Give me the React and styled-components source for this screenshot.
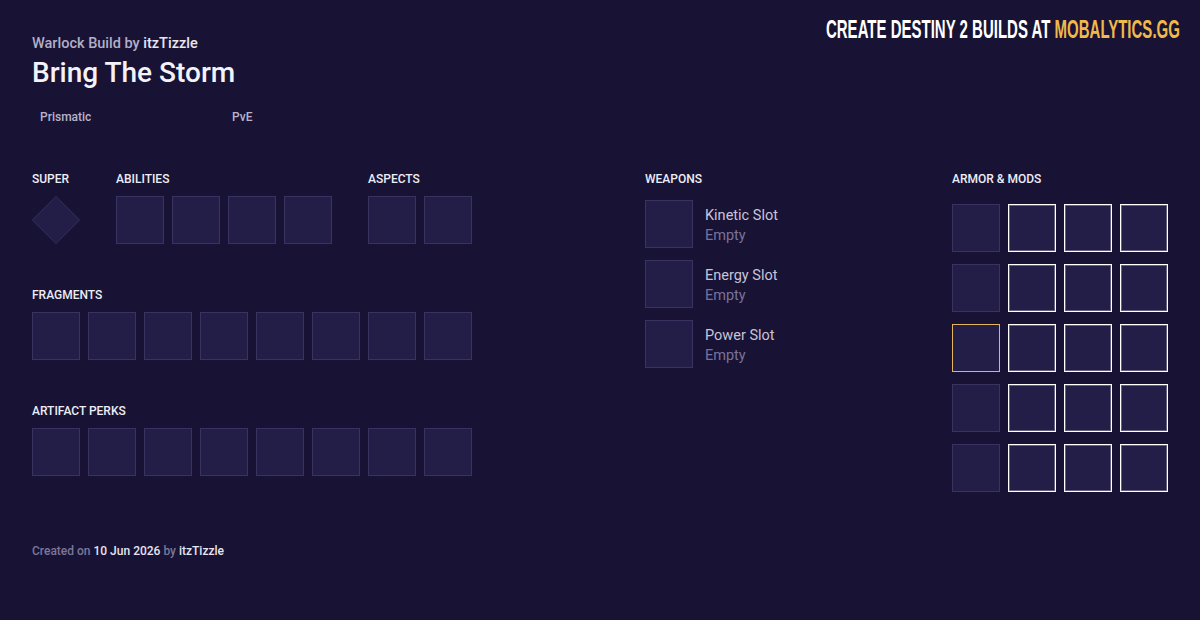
import React from 'react';
import styled, { createGlobalStyle } from 'styled-components';

const GlobalStyle = createGlobalStyle`
  html, body {
    margin: 0;
    padding: 0;
    background: #181334;
  }
  body {
    font-family: Roboto, "Noto Sans", sans-serif;
  }
`;

export const Page = styled.div`
  width: 1200px;
  height: 620px;
  box-sizing: border-box;
  padding: 17px 20px 0 32px;
  background: #181334;
  color: #eceaf4;
  display: flex;
  flex-direction: column;
`;

export const Header = styled.div`
  display: flex;
  justify-content: space-between;
  align-items: flex-start;
`;

export const TitleBlock = styled.div`
  display: flex;
  flex-direction: column;
  padding-top: 17px;
`;

export const Subtitle = styled.div`
  font-size: 14.5px;
  line-height: 20px;
  font-weight: 500;
  color: #b3aec8;
  b {
    color: #e8e6f1;
    font-weight: 500;
  }
`;

export const Title = styled.h1`
  margin: 2px 0 0;
  font-size: 28px;
  line-height: 34px;
  font-weight: 500;
  color: #f4f2f9;
`;

export const Tags = styled.div`
  display: grid;
  grid-template-columns: 192px 192px;
  margin-top: 15px;
`;

export const Tag = styled.div`
  padding: 4px 8px;
  font-size: 12px;
  line-height: 16px;
  font-weight: 500;
  color: #b8b3cb;
`;

export const Promo = styled.div`
  font-family: "Liberation Sans", Arial, sans-serif;
  font-weight: 700;
  font-size: 25px;
  line-height: 28px;
  color: #ffffff;
  white-space: nowrap;
  transform: scaleX(0.6);
  transform-origin: right top;
  margin-top: -2px;
  span {
    color: #f0b94a;
  }
`;

export const Body = styled.div`
  display: grid;
  grid-template-columns: 613px 307px 1fr;
  margin-top: 42px;
`;

export const Column = styled.div`
  display: flex;
  flex-direction: column;
  gap: 43px;
`;

export const Row = styled.div`
  display: flex;
  gap: 36px;
`;

export const Section = styled.div`
  display: flex;
  flex-direction: column;
`;

export const Label = styled.div`
  font-size: 12px;
  line-height: 16px;
  font-weight: 500;
  color: #eeedf5;
  margin-bottom: 9px;
`;

export const Boxes = styled.div`
  display: flex;
  gap: 8px;
`;

export const Box = styled.div`
  width: 48px;
  height: 48px;
  box-sizing: border-box;
  background: #231e47;
  border: 1px solid
    ${(p) => (p.$tone === 'white' ? '#ffffff' : p.$tone === 'gold' ? '#e7b559' : '#3a3361')};
  box-shadow: ${(p) => (p.$tone === 'white' ? 'inset 0 0 0 1px rgba(255, 255, 255, 0.3)' : 'none')};
`;

export const DiamondCell = styled.div`
  width: 48px;
  height: 48px;
  display: flex;
  align-items: center;
  justify-content: center;
`;

export const Diamond = styled.div`
  width: 34px;
  height: 34px;
  box-sizing: border-box;
  background: #231e47;
  border: 1px solid #2f2954;
  transform: rotate(45deg);
`;

export const WeaponList = styled.div`
  display: flex;
  flex-direction: column;
  gap: 12px;
  margin-top: 4px;
`;

export const Weapon = styled.div`
  display: flex;
  align-items: center;
  gap: 12px;
`;

export const WeaponText = styled.div`
  display: flex;
  flex-direction: column;
  margin-top: 3px;
`;

export const SlotName = styled.div`
  font-size: 14.5px;
  line-height: 20px;
  color: #c8c4d9;
`;

export const SlotValue = styled.div`
  font-size: 14.5px;
  line-height: 20px;
  color: #78729a;
`;

export const ArmorGrid = styled.div`
  display: grid;
  grid-template-columns: repeat(4, 48px);
  gap: 12px 8px;
  margin-top: 8px;
`;

export const Footer = styled.div`
  margin-top: 51px;
  font-size: 12px;
  line-height: 16px;
  font-weight: 500;
  color: #7c7699;
  b {
    color: #e6e4ef;
    font-weight: 500;
  }
`;

const range = (n) => Array.from({ length: n }, (_, i) => i);

const weapons = ['Kinetic Slot', 'Energy Slot', 'Power Slot'];

const App = () => {
  return (
    <>
      <GlobalStyle />
      <Page>
        <Header>
          <TitleBlock>
            <Subtitle>
              Warlock Build by <b>itzTizzle</b>
            </Subtitle>
            <Title>Bring The Storm</Title>
            <Tags>
              <Tag>Prismatic</Tag>
              <Tag>PvE</Tag>
            </Tags>
          </TitleBlock>
          <Promo>
            CREATE DESTINY 2 BUILDS AT <span>MOBALYTICS.GG</span>
          </Promo>
        </Header>

        <Body>
          <Column>
            <Row>
              <Section>
                <Label>SUPER</Label>
                <DiamondCell>
                  <Diamond />
                </DiamondCell>
              </Section>
              <Section>
                <Label>ABILITIES</Label>
                <Boxes>
                  {range(4).map((i) => (
                    <Box key={i} />
                  ))}
                </Boxes>
              </Section>
              <Section>
                <Label>ASPECTS</Label>
                <Boxes>
                  {range(2).map((i) => (
                    <Box key={i} />
                  ))}
                </Boxes>
              </Section>
            </Row>
            <Section>
              <Label>FRAGMENTS</Label>
              <Boxes>
                {range(8).map((i) => (
                  <Box key={i} />
                ))}
              </Boxes>
            </Section>
            <Section>
              <Label>ARTIFACT PERKS</Label>
              <Boxes>
                {range(8).map((i) => (
                  <Box key={i} />
                ))}
              </Boxes>
            </Section>
          </Column>

          <Section>
            <Label>WEAPONS</Label>
            <WeaponList>
              {weapons.map((w) => (
                <Weapon key={w}>
                  <Box />
                  <WeaponText>
                    <SlotName>{w}</SlotName>
                    <SlotValue>Empty</SlotValue>
                  </WeaponText>
                </Weapon>
              ))}
            </WeaponList>
          </Section>

          <Section>
            <Label>ARMOR &amp; MODS</Label>
            <ArmorGrid>
              {range(5).map((r) =>
                range(4).map((c) => (
                  <Box
                    key={`${r}-${c}`}
                    $tone={c > 0 ? 'white' : r === 2 ? 'gold' : 'dim'}
                  />
                ))
              )}
            </ArmorGrid>
          </Section>
        </Body>

        <Footer>
          Created on <b>10 Jun 2026</b> by <b>itzTizzle</b>
        </Footer>
      </Page>
    </>
  );
};

export default App;
